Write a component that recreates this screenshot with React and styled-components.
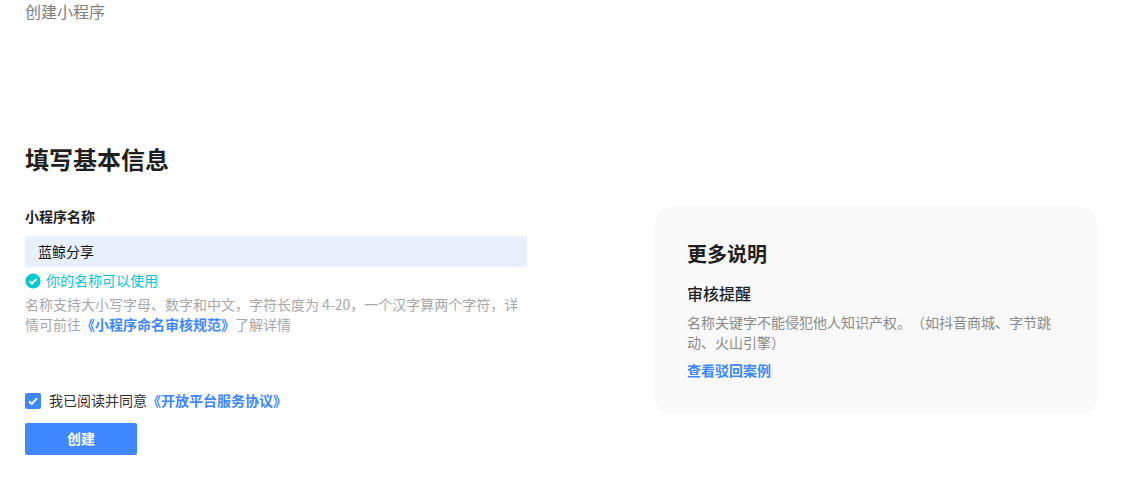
import React from "react";
import styled, { createGlobalStyle } from "styled-components";

const Global = createGlobalStyle`
  html, body { margin: 0; padding: 0; background: #fff; }
  body {
    font-family: "Noto Sans CJK SC", "Liberation Sans", sans-serif;
    overflow: hidden;
    text-spacing-trim: space-all;
  }
`;

const Page = styled.div`
  width: 1122px;
  height: 482px;
  box-sizing: border-box;
  padding: 0 25px;
`;

const Crumb = styled.div`
  height: 24px;
  font-size: 16px;
  line-height: 22px;
  color: #808080;
`;

const Heading = styled.h1`
  margin: 120px 0 0;
  height: 30px;
  font-size: 24px;
  line-height: 30px;
  font-weight: 700;
  color: #1f1f1f;
`;

const Columns = styled.div`
  display: flex;
  justify-content: space-between;
  align-items: flex-start;
  margin-top: 33px;
`;

const Form = styled.div`
  width: 502px;
`;

const Label = styled.div`
  height: 20px;
  font-size: 14px;
  line-height: 18px;
  font-weight: 700;
  color: #1f1f1f;
`;

const NameInput = styled.div`
  margin-top: 9px;
  height: 31px;
  box-sizing: border-box;
  padding: 0 13px;
  background: #e8f0fb;
  border-radius: 2px;
  font-size: 14px;
  line-height: 30px;
  color: #111;
`;

const Status = styled.div`
  display: flex;
  align-items: flex-start;
  gap: 5px;
  height: 20px;
  margin-top: 4px;
  font-size: 14px;
  line-height: 18px;
  color: #00c8d2;
`;

const StatusIcon = styled.svg`
  display: block;
  margin-top: 2px;
`;

const Hint = styled.p`
  margin: 3px 0 0;
  font-size: 14px;
  line-height: 20px;
  color: #a8a8a8;
`;

const Link = styled.a`
  color: #3e87ff;
  font-weight: 700;
`;

const Agree = styled.label`
  display: flex;
  align-items: center;
  gap: 8px;
  margin-top: 57px;
  height: 20px;
  font-size: 14px;
  line-height: 18px;
  color: #333;
`;

const AgreeText = styled.span`
  display: block;
  margin-bottom: 2px;
`;

const Check = styled.span`
  display: flex;
  align-items: center;
  justify-content: center;
  width: 16px;
  height: 16px;
  border-radius: 2px;
  background: #3e87ff;
`;

const CreateButton = styled.button`
  display: block;
  width: 112px;
  height: 32px;
  margin-top: 12px;
  border: 0;
  border-radius: 2px;
  background: #3e87ff;
  color: #fff;
  font: 700 14px "Noto Sans CJK SC", sans-serif;
  padding: 0 0 2px;
`;

const Panel = styled.aside`
  width: 442px;
  height: 206px;
  box-sizing: border-box;
  padding: 32px 32px 0;
  background: #f9f9f9;
  border-radius: 16px;
`;

const PanelTitle = styled.h2`
  margin: 0;
  font-size: 20px;
  line-height: 30px;
  font-weight: 700;
  color: #1f1f1f;
`;

const PanelSub = styled.h3`
  margin: 12px 0 0;
  font-size: 16px;
  line-height: 24px;
  font-weight: 500;
  color: #1f1f1f;
`;

const PanelText = styled.p`
  margin: 7px 0 0;
  font-size: 14px;
  line-height: 20px;
  color: #8a8a8a;
  width: 376px;
`;

const PanelLink = styled(Link)`
  display: block;
  margin-top: 8px;
  font-size: 14px;
  line-height: 20px;
`;

export default function App() {
  return (
    <Page>
      <Global />
      <Crumb>创建小程序</Crumb>
      <Heading>填写基本信息</Heading>
      <Columns>
        <Form>
          <Label>小程序名称</Label>
          <NameInput>蓝鲸分享</NameInput>
          <Status>
            <StatusIcon width="16" height="16" viewBox="0 0 16 16">
              <circle cx="8" cy="8" r="7.6" fill="#00c8d2" />
              <path d="M4.6 8.1l2.4 2.4 4.5-4.6" fill="none" stroke="#fff" strokeWidth="2" />
            </StatusIcon>
            你的名称可以使用
          </Status>
          <Hint>
            名称支持大小写字母、数字和中文，字符长度为 4-20，一个汉字算两个字符，详情可前往<Link>《小程序命名审核规范》</Link>了解详情
          </Hint>
          <Agree>
            <Check>
              <svg width="12" height="12" viewBox="0 0 12 12">
                <path d="M2 6.2l2.8 2.7L10 3.4" fill="none" stroke="#fff" strokeWidth="2" />
              </svg>
            </Check>
            <AgreeText>我已阅读并同意<Link>《开放平台服务协议》</Link></AgreeText>
          </Agree>
          <CreateButton>创建</CreateButton>
        </Form>
        <Panel>
          <PanelTitle>更多说明</PanelTitle>
          <PanelSub>审核提醒</PanelSub>
          <PanelText>名称关键字不能侵犯他人知识产权。（如抖音商城、字节跳动、火山引擎）</PanelText>
          <PanelLink>查看驳回案例</PanelLink>
        </Panel>
      </Columns>
    </Page>
  );
}
